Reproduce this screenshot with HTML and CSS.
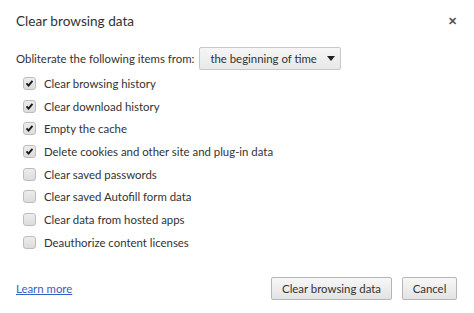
FILE: index.html
```html
<!DOCTYPE html>
<html>
<head>
<meta charset="utf-8">
<link rel="stylesheet" href="styles.css">
</head>
<body>
<div class="dialog">
  <div class="header">
    <div class="title">Clear browsing data</div>
    <div class="close">&#x2715;</div>
  </div>
  <div class="from">
    <span class="from-label">Obliterate the following items from:</span>
    <div class="select"><span>the beginning of time</span><span class="arrow"></span></div>
  </div>
  <div class="list">
    <label class="row"><span class="cb checked"><svg viewBox="0 0 13 13" width="13" height="13"><path d="M3 6.4 L5.4 9 L10 3.4" fill="none" stroke="#1a1a1a" stroke-width="2.3"/></svg></span>Clear browsing history</label>
    <label class="row"><span class="cb checked"><svg viewBox="0 0 13 13" width="13" height="13"><path d="M3 6.4 L5.4 9 L10 3.4" fill="none" stroke="#1a1a1a" stroke-width="2.3"/></svg></span>Clear download history</label>
    <label class="row"><span class="cb checked"><svg viewBox="0 0 13 13" width="13" height="13"><path d="M3 6.4 L5.4 9 L10 3.4" fill="none" stroke="#1a1a1a" stroke-width="2.3"/></svg></span>Empty the cache</label>
    <label class="row"><span class="cb checked"><svg viewBox="0 0 13 13" width="13" height="13"><path d="M3 6.4 L5.4 9 L10 3.4" fill="none" stroke="#1a1a1a" stroke-width="2.3"/></svg></span>Delete cookies and other site and plug-in data</label>
    <label class="row"><span class="cb"></span>Clear saved passwords</label>
    <label class="row"><span class="cb"></span>Clear saved Autofill form data</label>
    <label class="row"><span class="cb"></span>Clear data from hosted apps</label>
    <label class="row"><span class="cb"></span>Deauthorize content licenses</label>
  </div>
  <div class="footer">
    <a class="learn" href="#">Learn more</a>
    <div class="buttons">
      <div class="btn btn-main">Clear browsing data</div>
      <div class="btn btn-cancel">Cancel</div>
    </div>
  </div>
</div>
</body>
</html>
```
FILE: styles.css
```css
html, body {
  margin: 0;
  padding: 0;
  background: #fff;
}
body {
  font-family: Lato, "Open Sans", sans-serif;
  font-size: 11.4px;
  color: #333;
  width: 474px;
  height: 313px;
  overflow: hidden;
}
.dialog {
  padding: 0 17px 0 16px;
  display: flex;
  flex-direction: column;
}
.header {
  display: flex;
  justify-content: space-between;
  align-items: center;
  height: 20px;
  margin-top: 11px;
}
.title {
  font-size: 13.6px;
  color: #333;
}
.close {
  font-size: 11px;
  color: #555;
  font-weight: bold;
}
.from {
  display: flex;
  align-items: center;
  margin-top: 16px;
  gap: 5px;
  white-space: nowrap;
}
.select {
  box-sizing: border-box;
  height: 23px;
  width: 142px;
  border: 1px solid #c8c8c8;
  border-radius: 2px;
  background: linear-gradient(#f6f6f6, #e8e8e8);
  display: flex;
  align-items: center;
  justify-content: space-between;
  padding: 0 5px 0 10px;
  color: #333;
}
.arrow {
  width: 0;
  height: 0;
  border-left: 4.5px solid transparent;
  border-right: 4.5px solid transparent;
  border-top: 5px solid #222;
}
.list {
  display: flex;
  flex-direction: column;
  margin-top: 2px;
  padding-left: 7px;
}
.row {
  display: flex;
  align-items: center;
  height: 22.7px;
  gap: 8px;
  white-space: nowrap;
}
.cb {
  width: 13px;
  height: 13px;
  box-sizing: border-box;
  border: 1px solid #bdbdbd;
  border-radius: 3px;
  background: linear-gradient(#ededed, #dcdcdc);
  display: flex;
  align-items: center;
  justify-content: center;
}
.cb svg {
  display: block;
}
.footer {
  display: flex;
  justify-content: space-between;
  align-items: center;
  margin-top: 23px;
}
.learn {
  color: #3660c4;
  text-decoration: underline;
}
.buttons {
  display: flex;
  gap: 10px;
}
.btn {
  height: 23px;
  box-sizing: border-box;
  border: 1px solid #b5b5b5;
  border-radius: 2px;
  background: linear-gradient(#f7f7f7, #e3e3e3);
  display: flex;
  align-items: center;
  justify-content: center;
  white-space: nowrap;
  color: #333;
}
.btn-main {
  width: 121px;
}
.btn-cancel {
  width: 55px;
}
```
